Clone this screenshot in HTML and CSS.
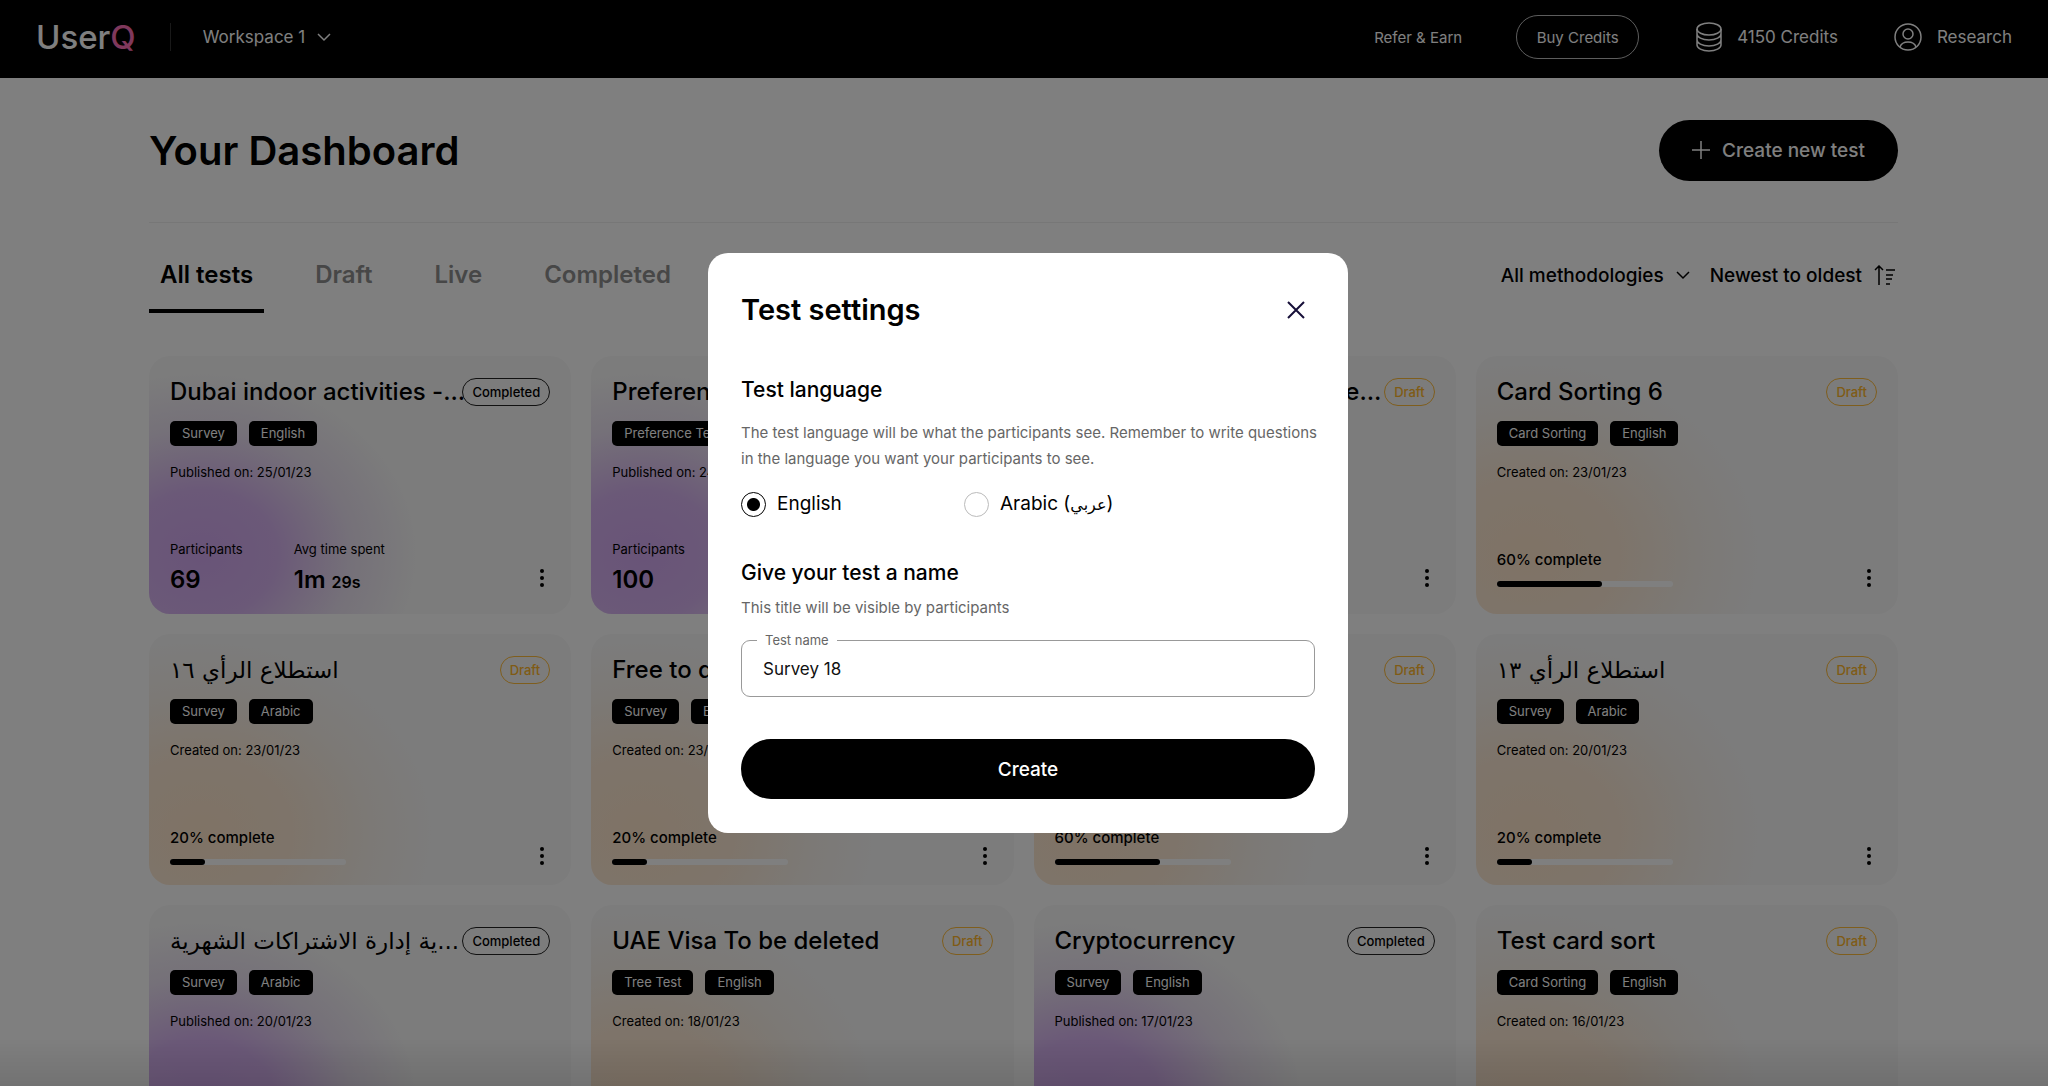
FILE: index.html
```html
<!DOCTYPE html>
<html lang="en">
    <head>
        <meta charset="utf-8" />
        <title>UserQ - Your Dashboard</title>
        <link rel="stylesheet" href="styles.css">
    </head>
    <body>
        <header class="topbar">
            <a href="#" class="logo">User<span>Q</span></a>
            <button type="button" class="workspace">
                Workspace 1
                <svg width="14" height="9" viewBox="0 0 14 9"><path d="M1 1l6 6 6-6" /></svg>
            </button>
            <nav class="topnav">
                <a href="#" class="refer">Refer &amp; Earn</a>
                <button type="button" class="buy">Buy Credits</button>
                <a href="#" class="credits">
                    <svg width="26" height="30" viewBox="0 0 26 30">
                        <ellipse cx="13" cy="7" rx="12" ry="6" />
                        <path d="M1 7v16c0 3 5 6 12 6s12-3 12-6V7M1 12c0 3 5 6 12 6s12-3 12-6M1 18c0 3 5 6 12 6s12-3 12-6" />
                    </svg>
                    4150 Credits
                </a>
                <a href="#" class="account">
                    <svg width="28" height="28" viewBox="0 0 28 28">
                        <circle cx="14" cy="14" r="13" />
                        <circle cx="14" cy="11" r="5" />
                        <path d="M6 24c1-3 4-5 8-5s7 2 8 5" />
                    </svg>
                    Research
                </a>
            </nav>
        </header>

        <main class="page">
            <div class="heading">
                <h1>Your Dashboard</h1>
                <button type="button" class="createNew">
                    <svg width="18" height="18" viewBox="0 0 18 18"><path d="M9 0v18M0 9h18" /></svg>
                    Create new test
                </button>
            </div>

            <div class="filters">
                <nav class="tabs">
                    <a href="#" class="active">All tests</a>
                    <a href="#">Draft</a>
                    <a href="#">Live</a>
                    <a href="#">Completed</a>
                </nav>
                <div class="sorting">
                    <button type="button">
                        All methodologies
                        <svg width="14" height="9" viewBox="0 0 14 9"><path d="M1 1l6 6 6-6" /></svg>
                    </button>
                    <button type="button" class="sort">
                        Newest to oldest
                        <svg width="22" height="20" viewBox="0 0 22 20"><path d="M5 20V1M1 5l4-4 4 4M12 5h9M12 10h7M12 14h6M12 19h4" /></svg>
                    </button>
                </div>
            </div>

            <section class="cards">
                <article class="card completed">
                    <div class="cardTop"><h2>Dubai indoor activities -…</h2><span class="badge">Completed</span></div>
                    <div class="tags"><span>Survey</span><span>English</span></div>
                    <p class="date">Published on: 25/01/23</p>
                    <div class="cardBottom">
                        <dl>
                            <div><dt>Participants</dt><dd>69</dd></div>
                            <div><dt>Avg time spent</dt><dd>1m <small>29s</small></dd></div>
                        </dl>
                        <button type="button" class="more" aria-label="More"><i></i><i></i><i></i></button>
                    </div>
                </article>
                <article class="card completed">
                    <div class="cardTop"><h2>Preference Test</h2><span class="badge">Completed</span></div>
                    <div class="tags"><span>Preference Test</span><span>English</span></div>
                    <p class="date">Published on: 24/01/23</p>
                    <div class="cardBottom">
                        <dl>
                            <div><dt>Participants</dt><dd>100</dd></div>
                        </dl>
                        <button type="button" class="more" aria-label="More"><i></i><i></i><i></i></button>
                    </div>
                </article>
                <article class="card draft">
                    <div class="cardTop"><h2>Survey on delivery service…</h2><span class="badge">Draft</span></div>
                    <div class="tags"><span>Survey</span><span>English</span></div>
                    <p class="date">Created on: 23/01/23</p>
                    <div class="cardBottom">
                        <div class="progress"><p>60% complete</p><div class="bar"><div style="width: 60%"></div></div></div>
                        <button type="button" class="more" aria-label="More"><i></i><i></i><i></i></button>
                    </div>
                </article>
                <article class="card draft">
                    <div class="cardTop"><h2>Card Sorting 6</h2><span class="badge">Draft</span></div>
                    <div class="tags"><span>Card Sorting</span><span>English</span></div>
                    <p class="date">Created on: 23/01/23</p>
                    <div class="cardBottom">
                        <div class="progress"><p>60% complete</p><div class="bar"><div style="width: 60%"></div></div></div>
                        <button type="button" class="more" aria-label="More"><i></i><i></i><i></i></button>
                    </div>
                </article>

                <article class="card draft">
                    <div class="cardTop"><h2 lang="ar" dir="rtl">استطلاع الرأي ١٦</h2><span class="badge">Draft</span></div>
                    <div class="tags"><span>Survey</span><span>Arabic</span></div>
                    <p class="date">Created on: 23/01/23</p>
                    <div class="cardBottom">
                        <div class="progress"><p>20% complete</p><div class="bar"><div style="width: 20%"></div></div></div>
                        <button type="button" class="more" aria-label="More"><i></i><i></i><i></i></button>
                    </div>
                </article>
                <article class="card draft">
                    <div class="cardTop"><h2>Free to delete</h2><span class="badge">Draft</span></div>
                    <div class="tags"><span>Survey</span><span>English</span></div>
                    <p class="date">Created on: 23/01/23</p>
                    <div class="cardBottom">
                        <div class="progress"><p>20% complete</p><div class="bar"><div style="width: 20%"></div></div></div>
                        <button type="button" class="more" aria-label="More"><i></i><i></i><i></i></button>
                    </div>
                </article>
                <article class="card draft">
                    <div class="cardTop"><h2>Survey 14</h2><span class="badge">Draft</span></div>
                    <div class="tags"><span>Survey</span><span>English</span></div>
                    <p class="date">Created on: 20/01/23</p>
                    <div class="cardBottom">
                        <div class="progress"><p>60% complete</p><div class="bar"><div style="width: 60%"></div></div></div>
                        <button type="button" class="more" aria-label="More"><i></i><i></i><i></i></button>
                    </div>
                </article>
                <article class="card draft">
                    <div class="cardTop"><h2 lang="ar" dir="rtl">استطلاع الرأي ١٣</h2><span class="badge">Draft</span></div>
                    <div class="tags"><span>Survey</span><span>Arabic</span></div>
                    <p class="date">Created on: 20/01/23</p>
                    <div class="cardBottom">
                        <div class="progress"><p>20% complete</p><div class="bar"><div style="width: 20%"></div></div></div>
                        <button type="button" class="more" aria-label="More"><i></i><i></i><i></i></button>
                    </div>
                </article>

                <article class="card completed">
                    <div class="cardTop"><h2 lang="ar" dir="rtl">...ية إدارة الاشتراكات الشهرية</h2><span class="badge">Completed</span></div>
                    <div class="tags"><span>Survey</span><span>Arabic</span></div>
                    <p class="date">Published on: 20/01/23</p>
                </article>
                <article class="card draft">
                    <div class="cardTop"><h2>UAE Visa To be deleted</h2><span class="badge">Draft</span></div>
                    <div class="tags"><span>Tree Test</span><span>English</span></div>
                    <p class="date">Created on: 18/01/23</p>
                </article>
                <article class="card completed">
                    <div class="cardTop"><h2>Cryptocurrency</h2><span class="badge">Completed</span></div>
                    <div class="tags"><span>Survey</span><span>English</span></div>
                    <p class="date">Published on: 17/01/23</p>
                </article>
                <article class="card draft">
                    <div class="cardTop"><h2>Test card sort</h2><span class="badge">Draft</span></div>
                    <div class="tags"><span>Card Sorting</span><span>English</span></div>
                    <p class="date">Created on: 16/01/23</p>
                </article>
            </section>
        </main>

        <div class="overlay">
            <form class="modal" role="dialog" aria-labelledby="modalTitle">
                <div class="modalTop">
                    <h2 id="modalTitle">Test settings</h2>
                    <button type="button" class="close" aria-label="Close">
                        <svg width="18" height="18" viewBox="0 0 18 18"><path d="M1 1l16 16M17 1L1 17" /></svg>
                    </button>
                </div>
                <h3>Test language</h3>
                <p class="hint">The test language will be what the participants see. Remember to write questions in the language you want your participants to see.</p>
                <div class="languages">
                    <label><input type="radio" name="language" value="en" checked /> English</label>
                    <label><input type="radio" name="language" value="ar" /> <span>Arabic (<bdi lang="ar">عربي</bdi>)</span></label>
                </div>
                <h3>Give your test a name</h3>
                <p class="hint short">This title will be visible by participants</p>
                <fieldset class="field">
                    <legend><label for="testName">Test name</label></legend>
                    <input type="text" id="testName" name="testName" value="Survey 18" />
                </fieldset>
                <button type="submit" class="create">Create</button>
            </form>
        </div>
    </body>
</html>
```

FILE: styles.css
```css
*{
    box-sizing: border-box;
}

html, body{
    height: 100%;
}

body{
    margin: 0;
    overflow: hidden;
    font-family: Inter, "DejaVu Sans", sans-serif;
    font-weight: 400;
    color: #000;
    background: #fff;
}

h1, h2, h3, p, dl, dd{
    margin: 0;
}

a{
    color: inherit;
    text-decoration: none;
}

button{
    padding: 0;
    border: 0;
    background: none;
    color: inherit;
    font: inherit;
    cursor: pointer;
}

svg{
    flex: none;
    fill: none;
    stroke: currentColor;
    stroke-width: 1.5;
}

/* top bar */
.topbar{
    display: flex;
    align-items: center;
    height: 78px;
    padding: 0 36px;
    padding-bottom: 4px;
    background: #000;
    color: #fff;
}

.logo{
    padding-right: 34px;
    border-right: 1px solid #333;
    font-size: 33px;
    line-height: 28px;
    font-weight: 500;
}

.logo span{
    color: #ff70b8;
}

.workspace{
    display: flex;
    align-items: center;
    gap: 12px;
    margin-left: 32px;
    font-size: 17px;
}

.topnav{
    display: flex;
    align-items: center;
    margin-left: auto;
    font-size: 17px;
}

.refer, .buy{
    font-size: 15px;
}

.buy{
    width: 123px;
    height: 44px;
    margin: 0 57px 0 54px;
    border: 1px solid #bbb;
    border-radius: 22px;
}

.credits, .account{
    display: flex;
    align-items: center;
    gap: 15px;
}

.account{
    margin-left: 56px;
}

/* page */
.page{
    padding: 0 150px 0 149px;
}

.heading{
    display: flex;
    align-items: center;
    justify-content: space-between;
    height: 145px;
    border-bottom: 1px solid #eee;
}

h1{
    font-size: 40px;
    font-weight: 600;
}

.createNew{
    display: flex;
    align-items: center;
    justify-content: center;
    gap: 12px;
    width: 239px;
    height: 61px;
    border-radius: 31px;
    background: #000;
    color: #fff;
    font-size: 19px;
    font-weight: 500;
}

.filters{
    display: flex;
    justify-content: space-between;
    height: 90px;
    margin-bottom: 43px;
}

.tabs{
    display: flex;
    gap: 40px;
}

.tabs a{
    padding: 35px 11px 0;
    border-bottom: 4px solid transparent;
    color: #8e8e8e;
    font-size: 24px;
    line-height: 34px;
    font-weight: 600;
}

.tabs .active{
    border-color: #000;
    color: #000;
}

.sorting{
    display: flex;
    gap: 20px;
    padding-top: 14px;
}

.sorting button{
    display: flex;
    align-items: center;
    gap: 12px;
    font-size: 19px;
    font-weight: 500;
}

.sorting .sort{
    padding-right: 2px;
}

/* cards */
.cards{
    display: grid;
    grid-template-columns: repeat(4, minmax(0, 1fr));
    grid-template-rows: 258px 251px 251px;
    gap: 20px;
}

.card{
    padding: 21px;
    border-radius: 21px;
}

.completed{
    background: radial-gradient(ellipse 215px 180px at 52px 198px, #d2a8f0, #d6b2f0 35%, #ebe2f2 70%, #f8f8f8);
}

.draft{
    background: radial-gradient(ellipse 230px 190px at 52px 198px, #ffe6cb, #fce9d5 40%, #f8f3ed 75%, #f8f8f8);
}

.cardTop{
    display: flex;
    align-items: center;
    justify-content: space-between;
    height: 29px;
}

.cardTop h2{
    min-width: 0;
    white-space: nowrap;
    font-size: 24px;
    line-height: 36px;
    font-weight: 500;
}

.cardTop [lang="ar"]{
    font-family: "DejaVu Sans", sans-serif;
    font-size: 23px;
    font-weight: 400;
}

.badge{
    flex: none;
    padding: 0 9px;
    border: 1px solid #222;
    border-radius: 14px;
    font-size: 13px;
    line-height: 26px;
    font-weight: 500;
}

.draft .badge{
    border-color: #ffbc3a;
    color: #ffb62a;
}

.tags{
    display: flex;
    gap: 12px;
    margin-top: 15px;
}

.tags span{
    padding: 0 12px;
    border-radius: 5px;
    background: #000;
    color: #fff;
    font-size: 13px;
    line-height: 25px;
}

.date{
    margin-top: 16px;
    font-size: 13px;
    line-height: 20px;
}

.cardBottom{
    display: flex;
    align-items: flex-end;
    justify-content: space-between;
    height: 111px;
}

.cardBottom dl{
    display: flex;
    gap: 51px;
}

.cardBottom dt{
    font-size: 13px;
    line-height: 20px;
}

.cardBottom dd{
    margin-top: 8px;
    font-size: 24px;
    line-height: 26px;
    font-weight: 600;
}

.cardBottom small{
    font-size: 16px;
    line-height: 16px;
}

.progress{
    width: 176px;
    font-size: 15px;
    line-height: 20px;
    font-weight: 500;
}

.bar{
    height: 6px;
    margin: 11px 0 6px;
    border-radius: 3px;
    background: #fff;
}

.bar div{
    height: 6px;
    border-radius: 3px;
    background: #000;
}

.more{
    display: flex;
    flex-direction: column;
    gap: 3px;
    padding: 6px;
}

.more i{
    width: 4px;
    height: 4px;
    border-radius: 2px;
    background: #000;
}

/* modal */
.overlay{
    position: fixed;
    inset: 0;
    display: flex;
    align-items: center;
    justify-content: center;
    padding-left: 8px;
    background: linear-gradient(to top, rgba(0, 0, 0, 0.1), transparent 48px), rgba(0, 0, 0, 0.5);
}

.modal{
    width: 640px;
    padding: 34px 33px;
    border-radius: 20px;
    background: #fff;
}

.modalTop{
    display: flex;
    align-items: center;
    justify-content: space-between;
    margin-bottom: 43px;
}

.modalTop h2{
    font-size: 29px;
    line-height: 46px;
    font-weight: 600;
}

.close{
    padding: 10px;
    line-height: 0;
    color: #160f38;
}

.close svg{
    stroke-width: 2;
}

.modal h3{
    font-size: 21px;
    line-height: 28px;
    font-weight: 500;
}

.hint{
    margin: 16px -8px 19px 0;
    color: #666;
    font-size: 15px;
    line-height: 26px;
}

.languages{
    display: grid;
    grid-template-columns: 223px 1fr;
    margin-bottom: 42px;
    font-size: 19px;
    line-height: 26px;
}

.languages label{
    display: flex;
    align-items: center;
    gap: 11px;
}

.languages bdi{
    font-size: 16px;
}

.languages input{
    appearance: none;
    width: 25px;
    height: 25px;
    margin: 0;
    border: 1px solid #bbb;
    border-radius: 50%;
}

.languages input:checked{
    border-color: #000;
    background: radial-gradient(circle, #000 6px, transparent 7px);
}

.hint.short{
    margin: 8px 0 12px;
}

.field{
    min-width: 0;
    height: 64px;
    margin: 0;
    padding: 0 15px;
    border: 1px solid #999;
    border-radius: 9px;
}

.field legend{
    padding: 0 8px;
    color: #666;
    font-size: 13px;
    line-height: 14px;
}

.field input{
    width: 100%;
    height: 44px;
    padding: 0 6px;
    border: 0;
    outline: 0;
    background: none;
    color: #111;
    font: inherit;
    font-size: 17px;
}

.create{
    width: 100%;
    height: 60px;
    margin-top: 42px;
    border-radius: 30px;
    background: #000;
    color: #fff;
    font-size: 19px;
    font-weight: 500;
}
```
